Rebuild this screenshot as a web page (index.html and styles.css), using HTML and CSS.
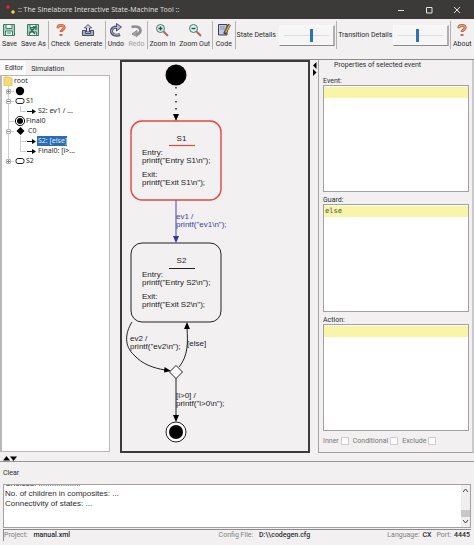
FILE: index.html
```html
<!DOCTYPE html>
<html lang="en">
<head>
<meta charset="utf-8">
<title>:: The Sinelabore Interactive State-Machine Tool ::</title>
<link rel="stylesheet" href="styles.css">
</head>
<body>
<div class="app">
  <header class="titlebar">
    <svg class="logo" width="12" height="12" viewBox="0 0 12 12"><circle cx="2" cy="3" r="1.700" fill="#e0263c"/><circle cx="7" cy="8" r="1.700" fill="#efe04a"/></svg>
    <h1>:: The Sinelabore Interactive State-Machine Tool ::</h1>
    <div class="winbtns">
      <button aria-label="Minimize"><svg width="8" height="8" viewBox="0 0 8 8"><path d="M1 4.500h6"/></svg></button>
      <button aria-label="Maximize"><svg width="8" height="8" viewBox="0 0 8 8"><path d="M1.500 1.500h5.500v5.500h-5.500z"/></svg></button>
      <button aria-label="Close"><svg width="8" height="8" viewBox="0 0 8 8"><path d="M1 1l6 6M7 1l-6 6"/></svg></button>
    </div>
  </header>

  <nav class="toolbar" aria-label="Tools">
    <div class="group save">
      <button><svg viewBox="0 0 14 14"><path d="M1.500 1.500h11v11h-11z" fill="#a9d2bd" stroke="#3d7d66"/><path d="M4 1.500h6v4h-6zM3.500 8h7v4.500h-7z" fill="#eef6f2" stroke="#3d7d66"/><path d="M5 10h4" stroke="#3d7d66"/></svg>Save</button>
      <button><svg viewBox="0 0 14 14"><path d="M1.500 1.500h11v11h-11z" fill="#a9d2bd" stroke="#3d7d66"/><path d="M4 1.500h6v3h-6zM3.500 9h7v3.500h-7z" fill="#eef6f2" stroke="#3d7d66"/><path d="M4 10l5-6M7 4h3v3M4 5l5 6" fill="none" stroke="#2f6b56" stroke-width="1.300"/></svg>Save As</button>
    </div>
    <div class="group check">
      <button><svg viewBox="0 0 14 14"><path d="M4 5.300V4.500C4 2.800 5.300 2.300 7 2.300s3.200.7 3.200 2.400c0 1.900-3.200 2-3.200 4.300M7 11v2" fill="none" stroke="#c2532e" stroke-width="2.800"/><path d="M4 4.800C4 2.800 5.300 2.300 7 2.300s3.200.7 3.200 2.400c0 1.900-3.200 2-3.200 3.800M7 11.500v1" fill="none" stroke="#f59468" stroke-width="1.200"/></svg>Check</button>
      <button><svg viewBox="0 0 14 14"><path d="M1.500 7.500h3v3h5v-3h3v5h-11z" fill="#a9abc0" stroke="#454763"/><path d="M7 1.500l3.500 3.500h-2v4h-3v-4h-2z" fill="#d5d6e2" stroke="#454763"/></svg>Generate</button>
    </div>
    <div class="group undo">
      <button><svg viewBox="0 0 14 14"><path d="M11 11.500c-3.500 1.500-8.500.5-8.500-3.500 0-3 2.500-4 6-4" fill="none" stroke="#4b4c6c" stroke-width="3"/><path d="M7.500.5l5 3.500-5 4z" fill="#b6b7d0" stroke="#4b4c6c"/><path d="M10.500 11.500c-3.500 1-7.800.3-7.800-3.500 0-2.600 2.300-3.800 6-3.800" fill="none" stroke="#c0c1d8"/></svg>Undo</button>
      <button disabled><svg viewBox="0 0 14 14"><path d="M2.500 4c5-1.500 9 .5 9 3.500 0 2-1.500 3.300-4 4.200" fill="none" stroke="#8c8c90" stroke-width="2.600"/><path d="M8 7.500v6l-5-2.500z" fill="#a5a5a8" stroke="#8c8c90"/></svg>Redo</button>
    </div>
    <div class="group zoom">
      <button><svg viewBox="0 0 14 14"><path d="M8.500 8.500l4.500 4.500" stroke="#b0685c" stroke-width="2"/><circle cx="5.500" cy="5.500" r="4" fill="#d9efe9" stroke="#47796f"/><path d="M3.500 5.500h4M5.500 3.500v4" stroke="#1f4e46" stroke-width="1.300"/></svg>Zoom In</button>
      <button><svg viewBox="0 0 14 14"><path d="M8.500 8.500l4.500 4.500" stroke="#b0685c" stroke-width="2"/><circle cx="5.500" cy="5.500" r="4" fill="#d9efe9" stroke="#47796f"/><path d="M3.500 5.500h4" stroke="#1f4e46" stroke-width="1.300"/></svg>Zoom Out</button>
    </div>
    <div class="group code">
      <button><svg viewBox="0 0 14 14"><path d="M1.500 1.500h8.500v10.500h-8.500z" fill="#c5c8dc" stroke="#3c3e5a"/><path d="M3 4h5M3 6h5" stroke="#8d91b3"/><path d="M12.500 1.500l-5 9.500" stroke="#453b35" stroke-width="3"/><path d="M12.500 2l-4 7.500" stroke="#e8b04c" stroke-width="1.500"/></svg>Code</button>
    </div>
    <div class="group state">
      <label for="state-details">State Details</label>
      <span class="sliderbox"><input type="range" id="state-details" min="0" max="100" value="62"></span>
    </div>
    <div class="group transition">
      <label for="transition-details">Transition Details</label>
      <span class="sliderbox"><input type="range" id="transition-details" min="0" max="100" value="44"></span>
    </div>
    <div class="group about">
      <button><svg viewBox="0 0 14 14"><path d="M4 5.300V4.500C4 2.800 5.300 2.300 7 2.300s3.200.7 3.200 2.400c0 1.900-3.200 2-3.200 4.300M7 11v2" fill="none" stroke="#a85a3e" stroke-width="2.800"/><path d="M4 4.800C4 2.800 5.300 2.300 7 2.300s3.200.7 3.200 2.400c0 1.900-3.200 2-3.200 3.800M7 11.500v1" fill="none" stroke="#f39d76" stroke-width="1.200"/></svg>About</button>
    </div>
  </nav>

  <main class="workspace">
    <section class="explorer">
      <div class="tabs" role="tablist">
        <button role="tab" aria-selected="true">Editor</button>
        <button role="tab" aria-selected="false">Simulation</button>
      </div>
      <ul class="tree">
        <li><svg width="10" height="10"><path d="M1 1h5l1 1h2v8h-8z" fill="#f5dc79" stroke="#e3c65c"/></svg><span>root</span></li>
        <li><button class="toggle" aria-label="Expand"><svg width="12" height="10"><path class="guide" d="M5.500 0v10M8 5.500h3"/><path class="box" d="M3.500 3.500h4v4h-4z"/><path class="sign" d="M4 5.500h3M5.500 4v3"/></svg></button><svg width="10" height="10"><circle cx="5" cy="5" r="4.200"/></svg></li>
        <li><button class="toggle" aria-label="Collapse"><svg width="12" height="10"><path class="guide" d="M5.500 0v10M8 5.500h3"/><path class="box" d="M3.500 3.500h4v4h-4z"/><path class="sign" d="M4 5.500h3"/></svg></button><svg width="10" height="10"><rect class="pill" x="1" y="2.500" width="8" height="5" rx="2"/></svg><span>S1</span></li>
        <li><svg width="34" height="10"><path class="guide" d="M5.500 0v10M17.500 0v5.500h6"/><path d="M24 5.500h5" stroke="#111"/><path d="M29 3l4 2.500-4 2.500z"/></svg><span>S2: ev1 / ...</span></li>
        <li><svg width="12" height="10"><path class="guide" d="M5.500 0v10M5.500 5.500h6"/></svg><svg width="10" height="10" overflow="visible"><circle cx="5" cy="5" r="4.600" fill="#fff" stroke="#111"/><circle cx="5" cy="5" r="3"/></svg><span>Final0</span></li>
        <li><button class="toggle" aria-label="Collapse"><svg width="12" height="10"><path class="guide" d="M5.500 0v10M8 5.500h3"/><path class="box" d="M3.500 3.500h4v4h-4z"/><path class="sign" d="M4 5.500h3"/></svg></button><svg width="10" height="10"><path d="M5.500 1l4 4-4 4-4-4z"/></svg><span class="wide">C0</span></li>
        <li><svg width="34" height="10"><path class="guide" d="M5.500 0v10M17.500 0v10M17.500 5.500h6"/><path d="M24 5.500h5" stroke="#111"/><path d="M29 3l4 2.500-4 2.500z"/></svg><span class="selected">S2: [else]</span></li>
        <li><svg width="34" height="10"><path class="guide" d="M5.500 0v10M17.500 0v5.500h6"/><path d="M24 5.500h5" stroke="#111"/><path d="M29 3l4 2.500-4 2.500z"/></svg><span>Final0: [i&gt;...</span></li>
        <li><button class="toggle" aria-label="Expand"><svg width="12" height="10"><path class="guide" d="M5.500 0v5M8 5.500h3"/><path class="box" d="M3.500 3.500h4v4h-4z"/><path class="sign" d="M4 5.500h3M5.500 4v3"/></svg></button><svg width="10" height="10"><rect class="pill" x="1" y="2.500" width="8" height="5" rx="2"/></svg><span>S2</span></li>
      </ul>
    </section>

    <section class="canvas" aria-label="State diagram">
      <svg viewBox="122 62 186 389" preserveAspectRatio="xMidYMin meet">
        <circle cx="176" cy="75" r="10.500"/>
        <path d="M176 87v28" stroke="#111" stroke-width="1.300" stroke-dasharray="1.500 5.500" fill="none"/>
        <path d="M173 114h6l-3 7z"/>
        <rect x="131" y="121" width="90" height="79" rx="11" fill="none" stroke="#e2483f" stroke-width="1.400"/>
        <path d="M169 145.500h26" stroke="#e2483f" stroke-width="1.200"/>
        <text x="181.500" y="141" text-anchor="middle">S1</text>
        <text x="142" y="155">Entry:</text>
        <text x="142" y="163">printf("Entry S1\n");</text>
        <text x="142" y="177">Exit:</text>
        <text x="142" y="185">printf("Exit S1\n");</text>

        <path d="M176 200v37" stroke="#4a4a9e"/>
        <path d="M173 236h6l-3 7z" fill="#35359a"/>
        <g class="blue"><text x="176" y="219">ev1 /</text><text x="176" y="227">printf("ev1\n");</text></g>

        <rect x="131" y="243" width="90" height="79" rx="11" fill="none" stroke="#222"/>
        <path d="M169 268.500h26" stroke="#222"/>
        <text x="181.500" y="263" text-anchor="middle">S2</text>
        <text x="142" y="277">Entry:</text>
        <text x="142" y="285">printf("Entry S2\n");</text>
        <text x="142" y="299">Exit:</text>
        <text x="142" y="307">printf("Exit S2\n");</text>

        <path d="M132 322c-7 11-8 24 2 33 8 9 19 13 31 15" fill="none" stroke="#222"/>
        <path d="M164.500 367l6.500 4-7 1.500z"/>
        <path d="M179 367c9-11 9-24 8-39" fill="none" stroke="#222"/>
        <path d="M184 329h6l-3-7z"/>
        <path d="M176 365.500l6.500 6.500-6.500 6.500-6.500-6.500z" fill="#fff" stroke="#222"/>
        <text x="130" y="341">ev2 /</text>
        <text x="130" y="349">printf("ev2\n");</text>
        <text x="187" y="346">[else]</text>
        <path d="M176 378v38" stroke="#222"/>
        <path d="M173 415h6l-3 7z"/>
        <text x="176" y="398">[i&gt;0] /</text>
        <text x="176" y="406">printf("i&gt;0\n");</text>
        <circle cx="176" cy="432" r="10" fill="#fff" stroke="#222"/>
        <circle cx="176" cy="432" r="7"/>
      </svg>
    </section>

    <div class="splitter vertical">
      <button aria-label="Collapse left"><svg width="5" height="7"><path d="M4.500 0v7L1 3.500z"/></svg></button>
      <button aria-label="Collapse right"><svg width="5" height="7"><path d="M1 0v7l3.500-3.500z"/></svg></button>
    </div>

    <section class="props">
      <h2>Properties of selected event</h2>
      <label for="event">Event:</label>
      <textarea id="event" spellcheck="false"></textarea>
      <label for="guard">Guard:</label>
      <textarea id="guard" spellcheck="false">else</textarea>
      <label for="action">Action:</label>
      <textarea id="action" spellcheck="false"></textarea>
      <div class="checks">
        <label>Inner <input type="checkbox" disabled></label>
        <label>Conditional <input type="checkbox" disabled></label>
        <label>Exclude <input type="checkbox" disabled></label>
      </div>
    </section>
  </main>

  <div class="splitter horizontal">
    <button aria-label="Collapse up"><svg width="7" height="5"><path d="M0 4.500h7L3.500 0z"/></svg></button>
    <button aria-label="Collapse down"><svg width="7" height="5"><path d="M0 .5h7L3.500 5z"/></svg></button>
  </div>

  <section class="log">
    <button class="clear">Clear</button>
    <div class="console">
      <div class="lines">
        <p>Choices: ...................</p>
        <p>No. of children in composites: ...</p>
        <p>Connectivity of states: ...</p>
      </div>
      <div class="scroll">
        <button aria-label="Scroll up"><svg width="7" height="5"><path d="M1 4l2.500-3 2.500 3"/></svg></button>
        <span class="thumb"></span>
        <button aria-label="Scroll down"><svg width="7" height="5"><path d="M1 1l2.500 3 2.500-3"/></svg></button>
      </div>
    </div>
  </section>

  <footer class="status">
    <span class="project">Project: <b>manual.xml</b></span>
    <span class="config">Config File: <b>D:\\codegen.cfg</b></span>
    <span class="target">Language: <b>CX</b></span>
    <span class="target">Port: <b>4445</b></span>
  </footer>
</div>
</body>
</html>
```
FILE: styles.css
```css
* { box-sizing: border-box; }

body {
  margin: 0;
  background: #f2f0f1;
  color: #2b2b2e;
  font: 7px/10px Roboto, "Noto Sans", sans-serif;
}

button {
  margin: 0;
  padding: 0;
  border: 0;
  background: none;
  color: inherit;
  font: inherit;
}

h1, h2, p, ul { margin: 0; padding: 0; font-weight: normal; }

svg { display: block; flex: none; }

.app { display: flex; flex-direction: column; height: 100vh; }

/* Title bar */
.titlebar {
  display: flex;
  flex: none;
  align-items: center;
  height: 19px;
  padding: 0 3px 0 6px;
  background: #3b3a38;
  color: #deddda;
}
.titlebar h1 { flex: 1; font: 7px/10px "Noto Sans", sans-serif; }
.winbtns { display: flex; }
.winbtns button { width: 28px; display: flex; justify-content: center; }
.winbtns svg { fill: none; stroke: #e4e3e1; }

/* Toolbar */
.toolbar {
  display: flex;
  flex: none;
  align-items: flex-start;
  height: 41px;
  padding-top: 2px;
  border-bottom: 1px solid #8c8b8c;
}
.group {
  display: flex;
  justify-content: space-around;
  align-items: center;
  height: 28px;
  min-width: 0;
  border-right: 1px solid #b3b1b2;
  white-space: nowrap;
}
.group button {
  display: flex;
  flex-direction: column;
  align-items: center;
  gap: 2px;
  padding-top: 2px;
}
.group button svg { width: 14px; height: 14px; }
.group button:disabled { color: #a3a2a3; }
.save { flex: 49; }
.check { flex: 57; }
.undo { flex: 42; }
.zoom { flex: 66; }
.code { flex: 22; }
.state { flex: 101; }
.transition { flex: 113; }
.state, .transition { justify-content: space-between; padding: 0 1px; }
.about { flex: 24; border-right: 0; }

.sliderbox {
  display: flex;
  align-items: center;
  width: 56px;
  height: 21px;
  padding: 0 4px;
  background: #f7f6f7;
  border: 1px solid #fbfafb;
  border-right: 2px solid #b1afb0;
  border-bottom-color: #8c8a8b;
}
input[type="range"] {
  appearance: none;
  width: 100%;
  height: 14px;
  margin: 0;
  background: linear-gradient(#dedcdd, #dedcdd) center / 100% 1px no-repeat;
}
input[type="range"]::-webkit-slider-thumb {
  appearance: none;
  width: 3px;
  height: 13px;
  background: #2d72bd;
}

/* Main area */
.workspace {
  flex: 1;
  min-height: 0;
  display: grid;
  grid-template-columns: 120fr 190fr 8fr 156fr;
  grid-template-rows: minmax(0, 1fr);
}
.explorer {
  display: flex;
  flex-direction: column;
  margin: 1px 10px 1px 0;
}
.tabs { display: flex; height: 14px; }
.tabs button { padding: 0 3px 0 5px; }
.tabs [aria-selected="true"] { background: #fbfafb; }
.tabs [aria-selected="false"] { padding-top: 2px; }
.tree {
  flex: 1;
  padding: 0 1px;
  list-style: none;
  background: #fff;
  border: 1px solid #b9b7b8;
  border-left-width: 2px;
  font: 7px/10px "Noto Sans", sans-serif;
}
.tree li { display: flex; align-items: center; height: 10px; }
.tree span { padding-left: 1px; }
.guide { fill: none; stroke: #cfcfcf; }
.box { fill: #fff; stroke: #b4b4b4; }
.sign { fill: none; stroke: #888; }
.pill { fill: #fff; stroke: #222; }
.tree .wide { padding-left: 3px; }
.selected { background: #2c6cb5; color: #dfe9f5; }

.canvas {
  min-height: 0;
  overflow: hidden;
  border: 2px solid #3c3b3c;
}
.canvas svg { width: 100%; height: 100%; }
.canvas text {
  font: 8px "Liberation Sans", sans-serif;
  fill: #222;
}
.canvas .blue text { fill: #4040a6; }

.splitter { display: flex; flex: none; }
.splitter.vertical { flex-direction: column; align-items: center; padding-top: 2px; }
.splitter.horizontal {
  height: 9px;
  padding: 2px 0 0 3px;
  border-bottom: 1px solid #9a999a;
}

.props {
  display: flex;
  flex-direction: column;
  padding: 0 3px 7px 4px;
  border: solid #a3a1a2;
  border-width: 0 0 1px 1px;
  border-right: 2px solid #cbc9ca;
}
.props h2 { padding: 0 11px; margin-bottom: 3px; font-size: 7px; line-height: 10px; }
.props > label { padding-top: 4px; line-height: 8px; }
.props textarea {
  flex: 1;
  min-height: 0;
  margin: 0;
  padding: 1px;
  border: 1px solid #a3a1a2;
  border-radius: 0;
  resize: none;
  background: #fff linear-gradient(#f8f4a8, #f8f4a8) 0 1px / 100% 11px no-repeat;
  color: #444;
  font: 7px/11px "DejaVu Sans Mono", monospace;
}
.checks { display: flex; gap: 4px; padding-top: 6px; color: #777; line-height: 8px; }
.checks label { display: flex; align-items: center; gap: 2px; }
.checks input {
  appearance: none;
  width: 8px;
  height: 8px;
  margin: 0;
  background: #fff;
  border: 1px solid #cfcdce;
}

/* Log output */
.log { flex: none; padding: 5px 3px 0; }
.clear { display: block; height: 12px; margin-bottom: 5px; }
.console {
  display: flex;
  height: 44px;
  background: #fff;
  border: 1px solid #a3a1a2;
  overflow: hidden;
}
.lines {
  flex: 1;
  margin-top: -6px;
  padding-left: 1px;
  font: 8px/10px "Liberation Sans", sans-serif;
}
.scroll {
  display: flex;
  flex-direction: column;
  align-items: center;
  justify-content: space-between;
  width: 9px;
  padding: 3px 0;
  background: #f0eff0;
}
.scroll svg { fill: none; stroke: #444; }
.thumb { width: 100%; height: 7px; margin-top: 14px; background: #c9c8c9; }

/* Status bar */
.status {
  display: flex;
  flex: none;
  gap: 5px;
  height: 12px;
  margin: 1px 3px 4px;
  padding-right: 1px;
  border-top: 1px solid #8c8a8b;
  border-left: 1px solid #8c8a8b;
  color: #808080;
}
.status b { font-weight: 500; color: #2b2b2e; padding-left: 4px; }
.status .target b { padding-left: 1px; }
.project { flex: 210; }
.config { flex: 164; }
```
